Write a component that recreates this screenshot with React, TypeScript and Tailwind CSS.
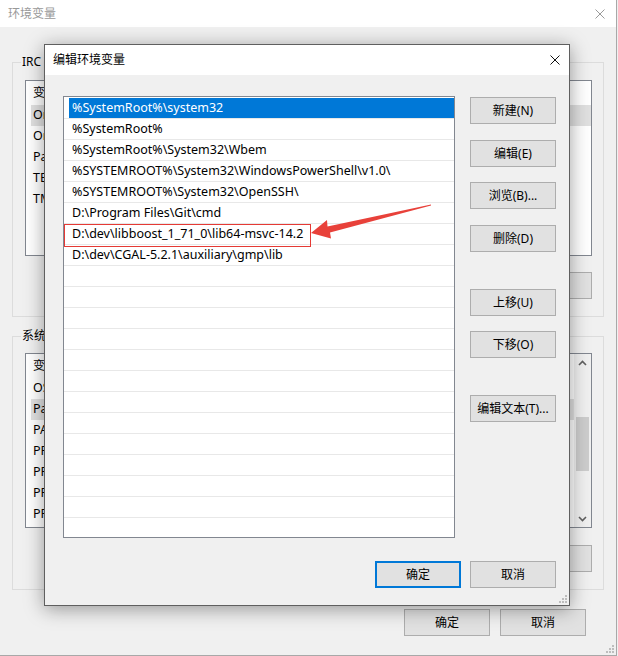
import React from "react";

const F = "font-['Noto_Sans','Noto_Sans_CJK_SC',sans-serif]";

function Btn({ label, className = "", focused = false }: { label: string; className?: string; focused?: boolean }) {
  return (
    <div
      className={`w-[86px] h-[27px] shrink-0 flex items-center justify-center bg-[#e1e1e1] text-[12px] text-black leading-none ${
        focused ? "border-2 border-[#0078d7]" : "border border-[#adadad]"
      } ${className}`}
    >
      {label}
    </div>
  );
}

function CloseX({ color, size = 10 }: { color: string; size?: number }) {
  return (
    <svg width={size} height={size} viewBox="0 0 10 10">
      <path d="M0.5 0.5 L9.5 9.5 M9.5 0.5 L0.5 9.5" stroke={color} strokeWidth="1" fill="none" />
    </svg>
  );
}

function Grip() {
  const pts = [
    [6, 0],
    [3, 3],
    [6, 3],
    [0, 6],
    [3, 6],
    [6, 6],
  ];
  return (
    <svg width="8" height="8" viewBox="0 0 8 8">
      {pts.map(([x, y], i) => (
        <rect key={i} x={x} y={y} width="2" height="2" fill="#bdbdbd" />
      ))}
    </svg>
  );
}

function Chevron({ up }: { up: boolean }) {
  return (
    <svg width="9" height="6" viewBox="0 0 9 6">
      <path d={up ? "M1 5 L4.5 1.5 L8 5" : "M1 1 L4.5 4.5 L8 1"} stroke="#606060" strokeWidth="1.6" fill="none" />
    </svg>
  );
}

function BgList({
  rows,
  selected,
  heightClass,
  scroll,
}: {
  rows: [string, string][];
  selected: number;
  heightClass: string;
  scroll?: boolean;
}) {
  return (
    <div className={`w-[567px] ${heightClass} border border-[#828790] bg-white flex overflow-hidden`}>
      <div className="flex-1 min-w-0 flex flex-col overflow-hidden">
        <div className="h-[24px] shrink-0 flex items-center text-[12px] text-black">
          <div className="w-[150px] pl-[7px] border-r border-[#e5e5e5] h-full flex items-center">变量</div>
          <div className="pl-[7px]">值</div>
        </div>
        {rows.map(([k, v], i) => (
          <div key={i} className="h-[21px] shrink-0 flex">
            <div
              className={`flex-1 min-w-0 ml-[5px] flex items-center text-[12.5px] text-black ${
                i === selected ? "bg-[#e0e0e0]" : ""
              }`}
            >
              <div className="w-[145px] shrink-0 pl-[2px] whitespace-nowrap overflow-hidden">{k}</div>
              <div className="pl-[7px] whitespace-nowrap">{v}</div>
            </div>
          </div>
        ))}
      </div>
      {scroll && (
        <div className="w-[17px] shrink-0 bg-[#f0f0f0] flex flex-col">
          <div className="h-[17px] flex items-center justify-center">
            <Chevron up />
          </div>
          <div className="flex-1 flex flex-col px-[2px]">
            <div className="mt-[46px] h-[54px] bg-[#cdcdcd]" />
          </div>
          <div className="h-[17px] flex items-center justify-center">
            <Chevron up={false} />
          </div>
        </div>
      )}
    </div>
  );
}

function GroupBox({ label, children }: { label: string; children: React.ReactNode }) {
  return (
    <div className="relative border border-[#dcdcdc] pl-[12px] pt-[17px] pr-[11px] pb-[17px]">
      <div className="absolute left-[8px] top-[-9px] px-[1px] bg-[#f0f0f0] text-[12px] text-black leading-[16px]">
        {label}
      </div>
      {children}
    </div>
  );
}

function BackgroundWindow() {
  const userRows: [string, string][] = [
    ["OneDrive", "C:\\Users\\IRC\\OneDrive"],
    ["OneDriveConsumer", "C:\\Users\\IRC\\OneDrive"],
    ["Path", "C:\\Users\\IRC\\AppData\\Local\\Microsoft\\WindowsApps;"],
    ["TEMP", "C:\\Users\\IRC\\AppData\\Local\\Temp"],
    ["TMP", "C:\\Users\\IRC\\AppData\\Local\\Temp"],
  ];
  const sysRows: [string, string][] = [
    ["OS", "Windows_NT"],
    ["Path", "C:\\Windows\\system32;C:\\Windows;"],
    ["PATHEXT", ".COM;.EXE;.BAT;.CMD;.VBS;.VBE;.JS"],
    ["PROCESSOR_ARCHITECTURE", "AMD64"],
    ["PROCESSOR_IDENTIFIER", "Intel64 Family 6"],
    ["PROCESSOR_LEVEL", "6"],
    ["PROCESSOR_REVISION", "9e0a"],
  ];
  return (
    <div className="relative w-[617px] h-[656px] border-r border-b border-[#a8a8a8] bg-[#f0f0f0] flex flex-col">
      <div className="h-[27px] shrink-0 bg-white flex items-center justify-between pl-[8px] pr-[11px]">
        <span className="text-[12px] text-[#999999]">环境变量</span>
        <CloseX color="#9a9a9a" />
      </div>
      <div className="flex-1 flex flex-col pl-[12px] pr-[12px]">
        <div className="mt-[35px]">
          <GroupBox label="IRC 的用户变量(U)">
            <BgList rows={userRows} selected={0} heightClass="h-[176px]" />
            <div className="mt-[16px] flex justify-end gap-[9px]">
              <Btn label="新建(N)..." />
              <Btn label="编辑(E)..." />
              <Btn label="删除(D)" />
            </div>
          </GroupBox>
        </div>
        <div className="mt-[19px]">
          <GroupBox label="系统变量(S)">
            <div className="-mt-[1px]">
              <BgList rows={sysRows} selected={1} heightClass="h-[175px]" scroll />
            </div>
            <div className="mt-[17px] flex justify-end gap-[9px]">
              <Btn label="新建(W)..." />
              <Btn label="编辑(I)..." />
              <Btn label="删除(L)" />
            </div>
          </GroupBox>
        </div>
        <div className="mt-[19px] flex justify-end gap-[10px] pr-[18px]">
          <Btn label="确定" />
          <Btn label="取消" />
        </div>
      </div>
      <div className="absolute right-[2px] bottom-[2px]">
        <Grip />
      </div>
    </div>
  );
}

function Dialog() {
  const items = [
    "%SystemRoot%\\system32",
    "%SystemRoot%",
    "%SystemRoot%\\System32\\Wbem",
    "%SYSTEMROOT%\\System32\\WindowsPowerShell\\v1.0\\",
    "%SYSTEMROOT%\\System32\\OpenSSH\\",
    "D:\\Program Files\\Git\\cmd",
    "D:\\dev\\libboost_1_71_0\\lib64-msvc-14.2",
    "D:\\dev\\CGAL-5.2.1\\auxiliary\\gmp\\lib",
  ];
  const rows = [...items, ...Array(14).fill("")];
  return (
    <div className="absolute left-[44px] top-[44px] w-[526px] h-[562px] border border-[#5f5f5f] bg-[#f0f0f0] flex flex-col shadow-[0_3px_18px_rgba(0,0,0,0.38)]">
      <div className="h-[30px] shrink-0 bg-white flex items-center justify-between pl-[8px] pr-[9px]">
        <span className="text-[12px] text-black">编辑环境变量</span>
        <CloseX color="#111111" />
      </div>
      <div className="flex-1 flex flex-col pl-[18px] pr-[13px] pt-[21px] pb-[17px]">
        <div className="flex">
          <div className="relative w-[392px] h-[442px] border border-[#828790] bg-white pt-[1px] flex flex-col overflow-hidden">
            {rows.map((t, i) => (
              <div key={i} className="h-[21px] shrink-0 border-b border-[#e8e8e8] flex">
                {i === 0 ? (
                  <div className="flex-1 ml-[5px] bg-[#0078d7] text-white text-[12.5px] flex items-center pl-[3px] whitespace-nowrap">
                    {t}
                  </div>
                ) : (
                  <div className="flex-1 ml-[5px] text-black text-[12.5px] flex items-center pl-[3px] whitespace-nowrap">
                    {t}
                  </div>
                )}
              </div>
            ))}
          </div>
          <div className="ml-[15px] flex flex-col">
            <Btn label="新建(N)" className="mt-[1px]" />
            <Btn label="编辑(E)" className="mt-[16px]" />
            <Btn label="浏览(B)..." className="mt-[15px]" />
            <Btn label="删除(D)" className="mt-[16px]" />
            <Btn label="上移(U)" className="mt-[37px]" />
            <Btn label="下移(O)" className="mt-[15px]" />
            <Btn label="编辑文本(T)..." className="mt-[37px]" />
          </div>
        </div>
        <div className="mt-[23px] flex justify-end gap-[9px]">
          <Btn label="确定" focused />
          <Btn label="取消" />
        </div>
      </div>
      <div className="absolute right-[2px] bottom-[2px]">
        <Grip />
      </div>
      <div className="absolute left-[19px] top-[179px] w-[247px] h-[23px] border-[1.5px] border-[#e53a35]" />
    </div>
  );
}

export default function App() {
  return (
    <div className={`relative w-[618px] h-[656px] overflow-hidden bg-[#f0f0f0] ${F}`}>
      <BackgroundWindow />
      <Dialog />
      <svg className="absolute left-0 top-0" width="618" height="656" viewBox="0 0 618 656">
        <polygon
          points="311,233 327,220 327.5,226.5 431,204.4 431,205.6 330,232.5 331,238.5"
          fill="#e8413a"
        />
      </svg>
    </div>
  );
}
